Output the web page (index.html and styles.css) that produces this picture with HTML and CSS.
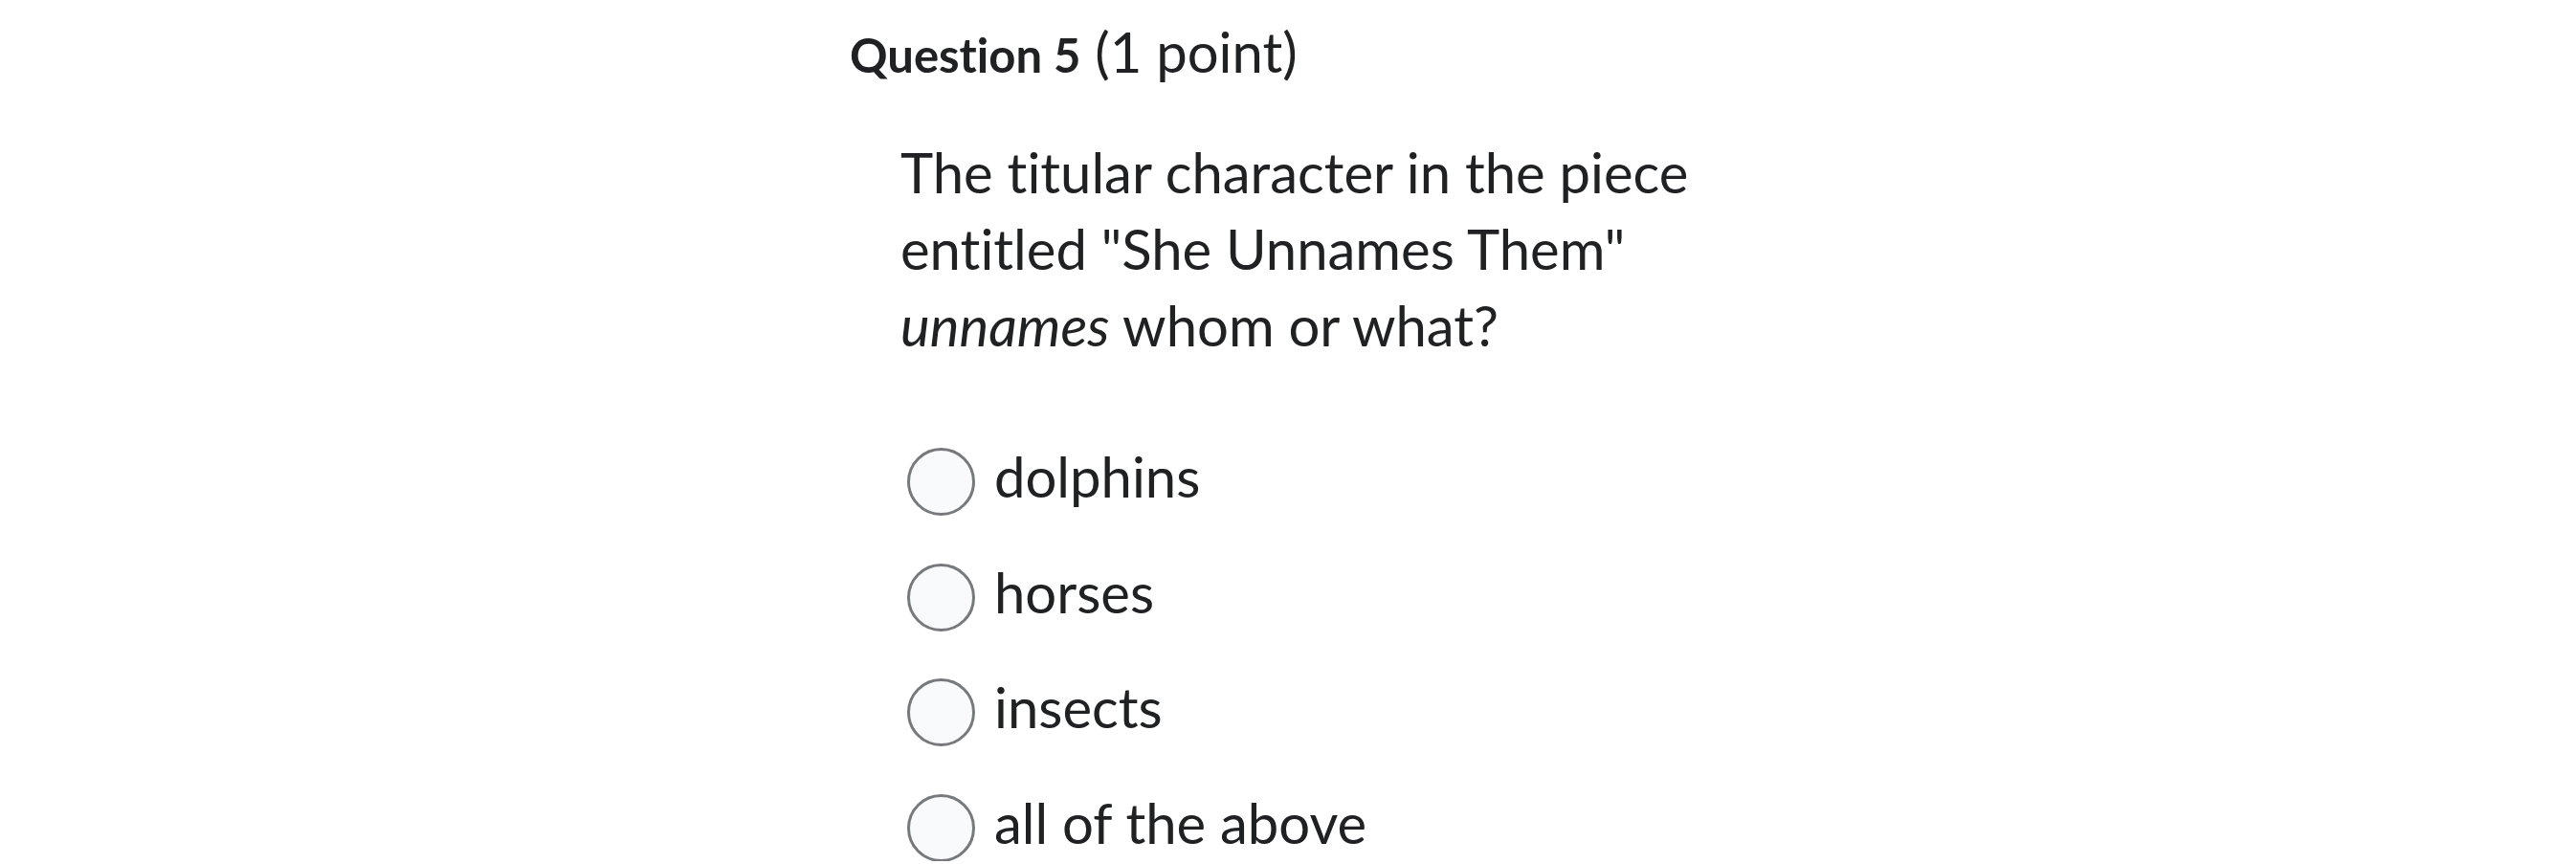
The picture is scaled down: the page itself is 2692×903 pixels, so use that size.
FILE: index.html
```html
<!DOCTYPE html>
<html lang="en">
<head>
<meta charset="utf-8">
<title>Question 5</title>
<link rel="stylesheet" href="styles.css">
</head>
<body>
<main class="quiz">
  <h2 class="q-title"><strong class="q-num">Question 5</strong> (1 point)</h2>
  <div class="q-body">
    <p class="q-text">The titular character in the piece entitled "She Unnames Them" <em>unnames</em> whom or what?</p>
    <ul class="options">
      <li class="option"><span class="radio"></span><span class="label">dolphins</span></li>
      <li class="option"><span class="radio"></span><span class="label">horses</span></li>
      <li class="option"><span class="radio"></span><span class="label">insects</span></li>
      <li class="option"><span class="radio"></span><span class="label">all of the above</span></li>
    </ul>
  </div>
</main>
</body>
</html>
```

FILE: styles.css
```css
html, body {
  margin: 0;
  padding: 0;
  background: #ffffff;
}

body {
  font-family: Lato, "Noto Sans", sans-serif;
  color: #202122;
  font-variant-ligatures: none;
  font-feature-settings: "liga" 0, "clig" 0;
}

.quiz {
  margin-left: 888px;
  padding-top: 24px;
  display: flex;
  flex-direction: column;
}

.q-title {
  margin: 0;
  font-size: 58px;
  font-weight: 400;
  line-height: 60px;
  height: 60px;
}

.q-num {
  font-size: 49px;
  font-weight: 700;
}

.q-body {
  margin-top: 56px;
  margin-left: 53px;
  display: flex;
  flex-direction: column;
}

.q-text {
  margin: 0;
  width: 880px;
  font-size: 58px;
  line-height: 80px;
}

.q-text em {
  font-style: italic;
}

.options {
  list-style: none;
  margin: 78px 0 0 0;
  padding: 0;
  display: flex;
  flex-direction: column;
  gap: 40.67px;
}

.option {
  display: flex;
  align-items: flex-start;
  gap: 20px;
  height: 80px;
}

.radio {
  box-sizing: border-box;
  flex: none;
  width: 71px;
  height: 71px;
  margin-top: 10px;
  margin-left: 7px;
  border: 3px solid #777a7c;
  border-radius: 50%;
  background: #f9fafc;
}

.label {
  font-size: 58px;
  line-height: 80px;
}
```
